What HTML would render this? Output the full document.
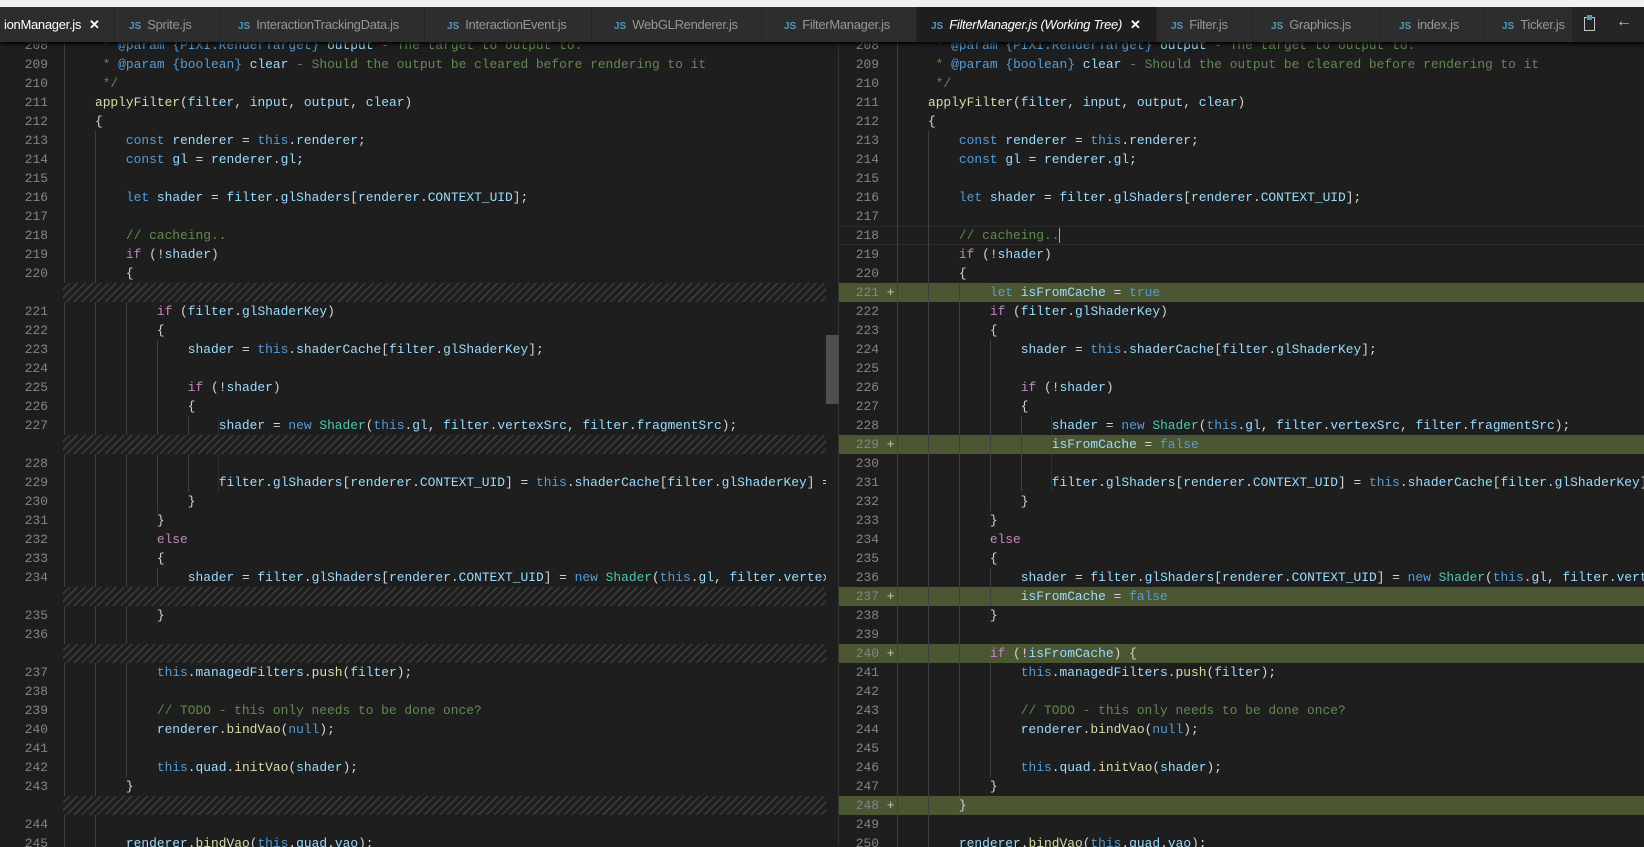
<!DOCTYPE html>
<html><head><meta charset="utf-8"><style>
*{margin:0;padding:0;box-sizing:border-box}
body{width:1644px;height:846px;overflow:hidden;background:#1e1e1e;position:relative;font-family:"Liberation Mono",monospace}
#menu{position:absolute;left:0;top:0;width:1644px;height:7px;background:#f0f0f0;z-index:5}
#tabs{position:absolute;left:0;top:7px;width:1644px;height:35px;background:#252526;z-index:4;font-family:"Liberation Sans",sans-serif;font-size:13px;box-shadow:0 2px 4px #000}
.tab{position:absolute;top:0;height:35px;background:#2d2d2d;color:#969696;line-height:35px;border-right:1px solid #252526;white-space:nowrap;overflow:hidden;letter-spacing:-0.3px}
.tab .js{color:#519aba;font-weight:bold;font-size:10px;margin-right:6px;letter-spacing:0}
.tab.act{background:#1e1e1e;color:#fff;font-style:italic}
.x{color:#fff;font-style:normal;font-weight:bold;margin-left:8px}
.pane{position:absolute;top:35.5px;overflow:hidden;font-size:12.9px;height:811px}
.l{position:relative;height:19px;line-height:19px;white-space:pre;color:#d4d4d4}
.l i{position:absolute;font-style:normal;color:#858585;text-align:right;width:40px;top:0}
.l b{position:absolute;font-weight:normal;top:0}
.l b::before{content:"";position:absolute;left:0;top:0;height:19px;width:calc(var(--g,0)*4ch);background:repeating-linear-gradient(to right,#404040 0 1px,transparent 1px 4ch)}
#L{left:0;width:826px}
#L .l i{left:8px}
#L .l b{left:64px}
#R{left:839px;width:805px}
#R .l i{left:0px}
#R .l b{left:58px}
.h{background:repeating-linear-gradient(135deg,#1e1e1e 0 4px,#3c3c3c 4px 5.5px);margin-left:63px}
.a{background:#4b5632}
.a i::after{content:" +";color:#c8c8c8;position:absolute;left:40px}
.cur{box-shadow:inset 0 1px #2a2a2a,inset 0 -1px #2a2a2a}
.m{color:#608b4e}.k{color:#569cd6}.c{color:#c586c0}.v{color:#9cdcfe}.f{color:#dcdcaa}.t{color:#4ec9b0}
#sb{position:absolute;left:826px;top:42px;width:13px;height:804px;background:#1e1e1e;border-right:1px solid #333}
#thumb{position:absolute;left:826px;top:335px;width:13px;height:69px;background:#4f4f4f}
</style></head><body>
<div id="menu"></div>
<div id="tabs">
<div class="tab" style="left:0;width:115px;background:#2d2d2d;color:#fff;padding-left:4px">ionManager.js<span class="x">✕</span></div>
<div class="tab" style="left:115px;width:105px;padding-left:14px"><span class="js">JS</span>Sprite.js</div>
<div class="tab" style="left:220px;width:205px;padding-left:18px"><span class="js">JS</span>InteractionTrackingData.js</div>
<div class="tab" style="left:425px;width:167px;padding-left:22px"><span class="js">JS</span>InteractionEvent.js</div>
<div class="tab" style="left:592px;width:170px;padding-left:22px"><span class="js">JS</span>WebGLRenderer.js</div>
<div class="tab" style="left:762px;width:155px;padding-left:22px"><span class="js">JS</span>FilterManager.js</div>
<div class="tab act" style="left:917px;width:240px;padding-left:14px"><span class="js" style="font-style:normal">JS</span>FilterManager.js (Working Tree)<span class="x">✕</span></div>
<div class="tab" style="left:1157px;width:96px;padding-left:14px"><span class="js">JS</span>Filter.js</div>
<div class="tab" style="left:1253px;width:128px;padding-left:18px"><span class="js">JS</span>Graphics.js</div>
<div class="tab" style="left:1381px;width:103px;padding-left:18px"><span class="js">JS</span>index.js</div>
<div class="tab" style="left:1484px;width:89px;padding-left:18px"><span class="js">JS</span>Ticker.js</div>
<div style="position:absolute;left:1584px;top:10px;width:11px;height:14px;border:1px solid #c5c5c5"></div>
<div style="position:absolute;left:1587px;top:8px;width:5px;height:5px;background:#519aba"></div>
<div style="position:absolute;left:1616px;top:6px;color:#c5c5c5;font-size:16px">←</div>
</div>

<div class="pane" id="L">
<div class="l"><i>208</i><b style="--g:1"><span class="m">     * </span><span class="k">@param</span> <span class="k">{PIXI.RenderTarget}</span> <span class="v">output</span><span class="m"> - The target to output to.</span></b></div>
<div class="l"><i>209</i><b style="--g:1"><span class="m">     * </span><span class="k">@param</span> <span class="k">{boolean}</span> <span class="v">clear</span><span class="m"> - Should the output be cleared before rendering to it</span></b></div>
<div class="l"><i>210</i><b style="--g:1"><span class="m">     */</span></b></div>
<div class="l"><i>211</i><b style="--g:1">    <span class="f">applyFilter</span>(<span class="v">filter</span>, <span class="v">input</span>, <span class="v">output</span>, <span class="v">clear</span>)</b></div>
<div class="l"><i>212</i><b style="--g:1">    {</b></div>
<div class="l"><i>213</i><b style="--g:2">        <span class="k">const</span> <span class="v">renderer</span> = <span class="k">this</span>.<span class="v">renderer</span>;</b></div>
<div class="l"><i>214</i><b style="--g:2">        <span class="k">const</span> <span class="v">gl</span> = <span class="v">renderer</span>.<span class="v">gl</span>;</b></div>
<div class="l"><i>215</i><b style="--g:2"></b></div>
<div class="l"><i>216</i><b style="--g:2">        <span class="k">let</span> <span class="v">shader</span> = <span class="v">filter</span>.<span class="v">glShaders</span>[<span class="v">renderer</span>.<span class="v">CONTEXT_UID</span>];</b></div>
<div class="l"><i>217</i><b style="--g:2"></b></div>
<div class="l"><i>218</i><b style="--g:2">        <span class="m">// cacheing..</span></b></div>
<div class="l"><i>219</i><b style="--g:2">        <span class="c">if</span> (!<span class="v">shader</span>)</b></div>
<div class="l"><i>220</i><b style="--g:2">        {</b></div>
<div class="l h"></div>
<div class="l"><i>221</i><b style="--g:3">            <span class="c">if</span> (<span class="v">filter</span>.<span class="v">glShaderKey</span>)</b></div>
<div class="l"><i>222</i><b style="--g:3">            {</b></div>
<div class="l"><i>223</i><b style="--g:4">                <span class="v">shader</span> = <span class="k">this</span>.<span class="v">shaderCache</span>[<span class="v">filter</span>.<span class="v">glShaderKey</span>];</b></div>
<div class="l"><i>224</i><b style="--g:4"></b></div>
<div class="l"><i>225</i><b style="--g:4">                <span class="c">if</span> (!<span class="v">shader</span>)</b></div>
<div class="l"><i>226</i><b style="--g:4">                {</b></div>
<div class="l"><i>227</i><b style="--g:5">                    <span class="v">shader</span> = <span class="k">new</span> <span class="t">Shader</span>(<span class="k">this</span>.<span class="v">gl</span>, <span class="v">filter</span>.<span class="v">vertexSrc</span>, <span class="v">filter</span>.<span class="v">fragmentSrc</span>);</b></div>
<div class="l h"></div>
<div class="l"><i>228</i><b style="--g:5"></b></div>
<div class="l"><i>229</i><b style="--g:5">                    <span class="v">filter</span>.<span class="v">glShaders</span>[<span class="v">renderer</span>.<span class="v">CONTEXT_UID</span>] = <span class="k">this</span>.<span class="v">shaderCache</span>[<span class="v">filter</span>.<span class="v">glShaderKey</span>] = <span class="v">shader</span>;</b></div>
<div class="l"><i>230</i><b style="--g:4">                }</b></div>
<div class="l"><i>231</i><b style="--g:3">            }</b></div>
<div class="l"><i>232</i><b style="--g:3">            <span class="c">else</span></b></div>
<div class="l"><i>233</i><b style="--g:3">            {</b></div>
<div class="l"><i>234</i><b style="--g:4">                <span class="v">shader</span> = <span class="v">filter</span>.<span class="v">glShaders</span>[<span class="v">renderer</span>.<span class="v">CONTEXT_UID</span>] = <span class="k">new</span> <span class="t">Shader</span>(<span class="k">this</span>.<span class="v">gl</span>, <span class="v">filter</span>.<span class="v">vertexSrc</span>, <span class="v">filter</span>.<span class="v">fragmentSrc</span>);</b></div>
<div class="l h"></div>
<div class="l"><i>235</i><b style="--g:3">            }</b></div>
<div class="l"><i>236</i><b style="--g:3"></b></div>
<div class="l h"></div>
<div class="l"><i>237</i><b style="--g:3">            <span class="k">this</span>.<span class="v">managedFilters</span>.<span class="f">push</span>(<span class="v">filter</span>);</b></div>
<div class="l"><i>238</i><b style="--g:3"></b></div>
<div class="l"><i>239</i><b style="--g:3">            <span class="m">// TODO - this only needs to be done once?</span></b></div>
<div class="l"><i>240</i><b style="--g:3">            <span class="v">renderer</span>.<span class="f">bindVao</span>(<span class="k">null</span>);</b></div>
<div class="l"><i>241</i><b style="--g:3"></b></div>
<div class="l"><i>242</i><b style="--g:3">            <span class="k">this</span>.<span class="v">quad</span>.<span class="f">initVao</span>(<span class="v">shader</span>);</b></div>
<div class="l"><i>243</i><b style="--g:2">        }</b></div>
<div class="l h"></div>
<div class="l"><i>244</i><b style="--g:2"></b></div>
<div class="l"><i>245</i><b style="--g:2">        <span class="v">renderer</span>.<span class="f">bindVao</span>(<span class="k">this</span>.<span class="v">quad</span>.<span class="v">vao</span>);</b></div>
</div>
<div id="sb"></div><div id="thumb"></div>

<div class="pane" id="R">
<div class="l"><i>208</i><b style="--g:1"><span class="m">     * </span><span class="k">@param</span> <span class="k">{PIXI.RenderTarget}</span> <span class="v">output</span><span class="m"> - The target to output to.</span></b></div>
<div class="l"><i>209</i><b style="--g:1"><span class="m">     * </span><span class="k">@param</span> <span class="k">{boolean}</span> <span class="v">clear</span><span class="m"> - Should the output be cleared before rendering to it</span></b></div>
<div class="l"><i>210</i><b style="--g:1"><span class="m">     */</span></b></div>
<div class="l"><i>211</i><b style="--g:1">    <span class="f">applyFilter</span>(<span class="v">filter</span>, <span class="v">input</span>, <span class="v">output</span>, <span class="v">clear</span>)</b></div>
<div class="l"><i>212</i><b style="--g:1">    {</b></div>
<div class="l"><i>213</i><b style="--g:2">        <span class="k">const</span> <span class="v">renderer</span> = <span class="k">this</span>.<span class="v">renderer</span>;</b></div>
<div class="l"><i>214</i><b style="--g:2">        <span class="k">const</span> <span class="v">gl</span> = <span class="v">renderer</span>.<span class="v">gl</span>;</b></div>
<div class="l"><i>215</i><b style="--g:2"></b></div>
<div class="l"><i>216</i><b style="--g:2">        <span class="k">let</span> <span class="v">shader</span> = <span class="v">filter</span>.<span class="v">glShaders</span>[<span class="v">renderer</span>.<span class="v">CONTEXT_UID</span>];</b></div>
<div class="l"><i>217</i><b style="--g:2"></b></div>
<div class="l cur"><i>218</i><b style="--g:2">        <span class="m">// cacheing..</span><span style="border-left:1px solid #aeafad"></span></b></div>
<div class="l"><i>219</i><b style="--g:2">        <span class="c">if</span> (!<span class="v">shader</span>)</b></div>
<div class="l"><i>220</i><b style="--g:2">        {</b></div>
<div class="l a"><i>221</i><b style="--g:3">            <span class="k">let</span> <span class="v">isFromCache</span> = <span class="k">true</span></b></div>
<div class="l"><i>222</i><b style="--g:3">            <span class="c">if</span> (<span class="v">filter</span>.<span class="v">glShaderKey</span>)</b></div>
<div class="l"><i>223</i><b style="--g:3">            {</b></div>
<div class="l"><i>224</i><b style="--g:4">                <span class="v">shader</span> = <span class="k">this</span>.<span class="v">shaderCache</span>[<span class="v">filter</span>.<span class="v">glShaderKey</span>];</b></div>
<div class="l"><i>225</i><b style="--g:4"></b></div>
<div class="l"><i>226</i><b style="--g:4">                <span class="c">if</span> (!<span class="v">shader</span>)</b></div>
<div class="l"><i>227</i><b style="--g:4">                {</b></div>
<div class="l"><i>228</i><b style="--g:5">                    <span class="v">shader</span> = <span class="k">new</span> <span class="t">Shader</span>(<span class="k">this</span>.<span class="v">gl</span>, <span class="v">filter</span>.<span class="v">vertexSrc</span>, <span class="v">filter</span>.<span class="v">fragmentSrc</span>);</b></div>
<div class="l a"><i>229</i><b style="--g:5">                    <span class="v">isFromCache</span> = <span class="k">false</span></b></div>
<div class="l"><i>230</i><b style="--g:5"></b></div>
<div class="l"><i>231</i><b style="--g:5">                    <span class="v">filter</span>.<span class="v">glShaders</span>[<span class="v">renderer</span>.<span class="v">CONTEXT_UID</span>] = <span class="k">this</span>.<span class="v">shaderCache</span>[<span class="v">filter</span>.<span class="v">glShaderKey</span>] = <span class="v">shader</span>;</b></div>
<div class="l"><i>232</i><b style="--g:4">                }</b></div>
<div class="l"><i>233</i><b style="--g:3">            }</b></div>
<div class="l"><i>234</i><b style="--g:3">            <span class="c">else</span></b></div>
<div class="l"><i>235</i><b style="--g:3">            {</b></div>
<div class="l"><i>236</i><b style="--g:4">                <span class="v">shader</span> = <span class="v">filter</span>.<span class="v">glShaders</span>[<span class="v">renderer</span>.<span class="v">CONTEXT_UID</span>] = <span class="k">new</span> <span class="t">Shader</span>(<span class="k">this</span>.<span class="v">gl</span>, <span class="v">filter</span>.<span class="v">vertexSrc</span>, <span class="v">filter</span>.<span class="v">fragmentSrc</span>);</b></div>
<div class="l a"><i>237</i><b style="--g:4">                <span class="v">isFromCache</span> = <span class="k">false</span></b></div>
<div class="l"><i>238</i><b style="--g:3">            }</b></div>
<div class="l"><i>239</i><b style="--g:3"></b></div>
<div class="l a"><i>240</i><b style="--g:3">            <span class="c">if</span> (!<span class="v">isFromCache</span>) {</b></div>
<div class="l"><i>241</i><b style="--g:4">                <span class="k">this</span>.<span class="v">managedFilters</span>.<span class="f">push</span>(<span class="v">filter</span>);</b></div>
<div class="l"><i>242</i><b style="--g:4"></b></div>
<div class="l"><i>243</i><b style="--g:4">                <span class="m">// TODO - this only needs to be done once?</span></b></div>
<div class="l"><i>244</i><b style="--g:4">                <span class="v">renderer</span>.<span class="f">bindVao</span>(<span class="k">null</span>);</b></div>
<div class="l"><i>245</i><b style="--g:4"></b></div>
<div class="l"><i>246</i><b style="--g:4">                <span class="k">this</span>.<span class="v">quad</span>.<span class="f">initVao</span>(<span class="v">shader</span>);</b></div>
<div class="l"><i>247</i><b style="--g:3">            }</b></div>
<div class="l a"><i>248</i><b style="--g:2">        }</b></div>
<div class="l"><i>249</i><b style="--g:2"></b></div>
<div class="l"><i>250</i><b style="--g:2">        <span class="v">renderer</span>.<span class="f">bindVao</span>(<span class="k">this</span>.<span class="v">quad</span>.<span class="v">vao</span>);</b></div>
</div>
</body></html>
